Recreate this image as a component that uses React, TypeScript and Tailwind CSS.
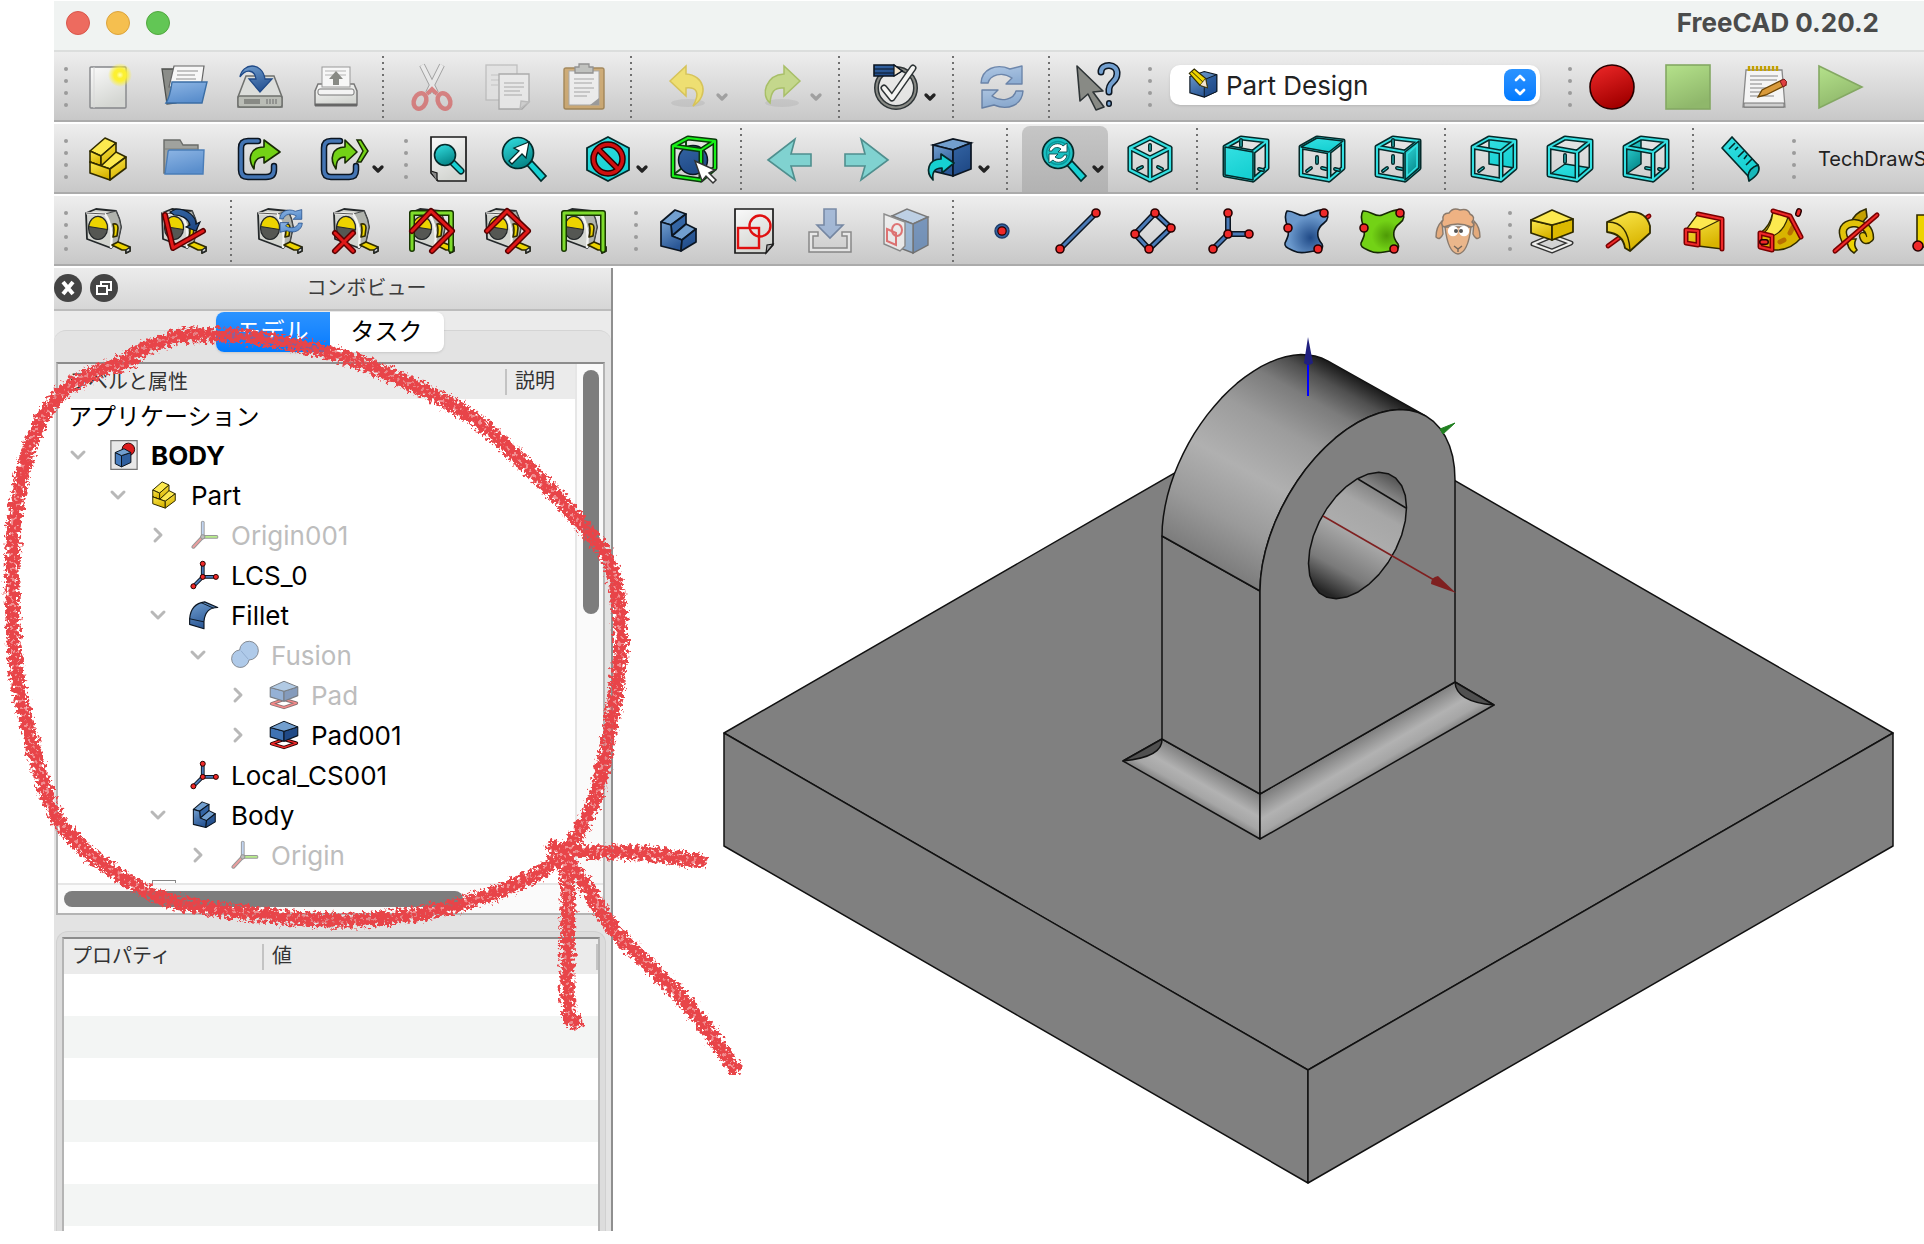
import { useState, type ReactNode } from "react";
import clsx from "clsx";
import { ChevronDown, ChevronRight, ChevronUp } from "lucide-react";

/* ---------- geometry helpers ---------- */

type Pt = [number, number];

// isometric circle: centre + u*cos + v*sin
function isoArc(cx: number, cy: number, k: number, from: number, to: number) {
  const pts: string[] = [];
  const steps = 28;
  for (let i = 0; i <= steps; i++) {
    const a = ((from + ((to - from) * i) / steps) * Math.PI) / 180;
    const x = cx + k * (97.5 * Math.cos(a));
    const y = cy - k * (55.5 * Math.cos(a) + 113 * Math.sin(a));
    pts.push(`${x.toFixed(1)},${y.toFixed(1)}`);
  }
  return pts.join(" L");
}

// smooth curve through a list of points
function smooth(p: Pt[]) {
  let d = `M${p[0][0]},${p[0][1]}`;
  for (let i = 0; i < p.length - 1; i++) {
    const a = p[Math.max(0, i - 1)];
    const b = p[i];
    const c = p[i + 1];
    const e = p[Math.min(p.length - 1, i + 2)];
    d += ` C${b[0] + (c[0] - a[0]) / 6},${b[1] + (c[1] - a[1]) / 6} ${c[0] - (e[0] - b[0]) / 6},${c[1] - (e[1] - b[1]) / 6} ${c[0]},${c[1]}`;
  }
  return d;
}

/* ---------- shared gradients ---------- */

function Gradients() {
  const list = [
    ["gBlue", "#729fcf", "#2a5796"],
    ["gBlueD", "#3465a4", "#204a87"],
    ["gYellow", "#fce94f", "#d8b400"],
    ["gCyan", "#34e0e2", "#16d0d2"],
    ["gCyanD", "#34e0e2", "#06898b"],
    ["gRed", "#ef2929", "#a40000"],
    ["gGrey", "#fafafa", "#d4d6d2"],
    ["gLime", "#b5e28b", "#8fb76b"],
    ["gFolder", "#8db5e4", "#5b8fcd"],
  ];
  return (
    <svg className="absolute h-0 w-0" aria-hidden="true">
      <defs>
        {list.map(([id, a, b]) => (
          <linearGradient key={id} id={id} x1="0" y1="0" x2="0.4" y2="1">
            <stop offset="0" stopColor={a} />
            <stop offset="1" stopColor={b} />
          </linearGradient>
        ))}
        <radialGradient id="gSun">
          <stop offset="0" stopColor="#ffffb0" />
          <stop offset="0.3" stopColor="#fcf032" />
          <stop offset="0.5" stopColor="#fcf032" />
          <stop offset="1" stopColor="#fcf032" stopOpacity="0" />
        </radialGradient>
        <radialGradient id="gBlob" cx="0.6" cy="0.65">
          <stop offset="0" stopColor="#204a87" />
          <stop offset="1" stopColor="#6a98cc" />
        </radialGradient>
        <radialGradient id="gBlobG" cx="0.6" cy="0.6">
          <stop offset="0" stopColor="#4e9a06" />
          <stop offset="0.7" stopColor="#73d216" />
        </radialGradient>
      </defs>
    </svg>
  );
}

/* ---------- icon building blocks ---------- */

function Rod({ d, c = "#4a7ab8", o = "#0b1521", w = 3 }: { d: string; c?: string; o?: string; w?: number }) {
  return (
    <g fill="none" strokeLinecap="round" strokeLinejoin="round">
      <path d={d} stroke={o} strokeWidth={w + 3} />
      <path d={d} stroke={c} strokeWidth={w} />
    </g>
  );
}

function Knobs({ at, r = 4 }: { at: Pt[]; r?: number }) {
  return (
    <g fill="#ef2929" stroke="#280000" strokeWidth="1.6">
      {at.map(([x, y]) => <circle key={`${x}-${y}`} cx={x} cy={y} r={r} />)}
    </g>
  );
}

function CubeRod({ d, w = 2 }: { d: string; w?: number }) {
  return <Rod d={d} c="#34e0e2" o="#042a2a" w={w} />;
}

const cubeFaces: Record<string, string> = {
  front: "M3,12 L31,17 V45 L3,40 Z",
  top: "M3,12 L19,3 L45,6 L31,17 Z",
  right: "M31,17 L45,6 V33 L31,45 Z",
  rear: "M19,3 L45,6 V33 L19,29 Z",
  bottom: "M3,40 L19,29 L45,33 L31,45 Z",
  left: "M3,12 L19,3 V29 L3,40 Z",
};

function Cube({ face }: { face: string }) {
  const behind = face === "rear" || face === "bottom" || face === "left";
  const shade = face === "left" || face === "right" ? "url(#gCyanD)" : "url(#gCyan)";
  const filled = <path d={cubeFaces[face]} fill={shade} stroke="#042a2a" strokeWidth="1.5" strokeLinejoin="round" />;
  return (
    <>
      {behind && filled}
      {face === "bottom" && <CubeRod d="M19,20 V27" w={1} />}
      {face === "left" && <CubeRod d="M24,33 L30,34 M37,34 L41,35" w={1} />}
      {face === "rear" && <CubeRod d="M9,36 L13,33" w={1} />}
      <CubeRod d="M3,12 L19,3 L45,6 L31,17 Z M3,12 V40 L31,45 V17 M31,45 L45,33 V6" />
      {!behind && filled}
      {face === "front" && <CubeRod d="M19,5 V11 M37,34 L41,35" w={1} />}
      {face === "top" && <CubeRod d="M19,22 V28 M9,36 L13,33 M24,33 L28,34 M37,34 L41,35" w={1} />}
      {face === "right" && (
        <>
          <CubeRod d="M19,5 V11 M19,21 V28 M9,36 L13,33 M23,33 L28,34" w={1} />
          <path d="M33,19 L43,10 V32 L33,41 Z" fill="none" stroke="#34e0e2" strokeWidth="1.6" />
        </>
      )}
    </>
  );
}

function Tape() {
  return (
    <g strokeLinejoin="round">
      <path d="M2,6 L12,2 L32,4 Q36,12 37,20 L34,34 L27,41 L3,32 Z" fill="#d3d5d0" stroke="#24282a" strokeWidth="1.8" />
      <path d="M21,7 L32,4 Q36,12 37,20 L34,34 L27,41 Q32,22 21,7 Z" fill="#b0b3ad" stroke="#4a4d4e" strokeWidth="1" />
      <path d="M2,6 L21,7 Q30,20 27,41" fill="none" stroke="#f4f4f2" strokeWidth="2.4" />
      <path d="M2,6 L21,7" fill="none" stroke="#555" strokeWidth="1" />
      <ellipse cx="14" cy="21" rx="9.5" ry="11.5" fill="#555753" stroke="#24282a" strokeWidth="1.2" />
      <path d="M4.6,19.5 A9.5,11.5 0 0 1 23.5,22.5 Z" fill="#edd400" stroke="#24282a" strokeWidth="1.2" />
      <path d="M29,17 Q34,16 34,21 L33,29 L29,30 Q31,23 29,17 Z" fill="#edd400" stroke="#302b00" strokeWidth="1.6" />
      <path d="M28,38 L34,35 L46,40 V44 L42,46 V43 L38,43 Z" fill="#edd400" stroke="#302b00" strokeWidth="1.7" />
      <path d="M46,40 V44 L42,46 V43 Z" fill="#d3d5d0" stroke="#24282a" strokeWidth="1.5" />
    </g>
  );
}

function Axes({ colors }: { colors: [string, string, string] }) {
  return (
    <>
      <Rod d="M22,27 V4" c={colors[0]} o="#444" w={3} />
      <Rod d="M22,27 H44" c={colors[1]} o="#444" w={3} />
      <Rod d="M22,27 L7,43" c={colors[2]} o="#444" w={3} />
      <circle cx="22" cy="27" r="3.5" fill="#888" stroke="#333" strokeWidth="1.4" />
    </>
  );
}

function Swirl() {
  return (
    <g fill="url(#gFolder)" stroke="#204a87" strokeWidth="1.4" strokeLinejoin="round">
      <path d="M3,20 C4,6 18,0 32,6 L44,3 L44,21 L28,21 L34,15 C24,8 12,12 10,20 Z" />
      <path d="M45,28 C44,42 30,48 16,42 L4,45 L4,27 L20,27 L14,33 C24,40 36,36 38,28 Z" />
    </g>
  );
}

const blob =
  "M5,4 C12,3 18,11 24,8 C32,5 36,2 42,3 C48,8 46,13 42,16 C34,22 34,30 40,37 C42,41 38,44 34,44 C26,44 20,48 12,44 C6,41 2,40 3,36 C6,30 8,26 5,18 C3,12 3,7 5,4 Z";

const icons: Record<string, ReactNode> = {
  new: (
    <>
      <rect x="6" y="4" width="36" height="41" rx="1" fill="url(#gGrey)" stroke="#85878a" strokeWidth="1.4" />
      <path d="M10,4 V45" stroke="#d8d8d8" />
      <circle cx="36" cy="12" r="12" fill="url(#gSun)" />
    </>
  ),
  open: (
    <>
      <path d="M2,6 H14 L16,40 L7,41 Z" fill="#8b8d89" stroke="#4d4f4c" strokeWidth="1.3" />
      <path d="M14,3 H44 L41,24 H9 Z" fill="#f7f7f7" stroke="#666" strokeWidth="1.2" />
      <path d="M17,8 H38 M17,12 H35 M16,16 H36" stroke="#b3b3b3" strokeWidth="1.6" />
      <path d="M12,19 H47 L42,40 H6 Q10,34 12,19 Z" fill="url(#gFolder)" stroke="#3b6ea5" strokeWidth="1.4" />
    </>
  ),
  save: (
    <>
      <path d="M10,13 H38 L46,34 V44 H2 V34 Z" fill="#dcdedb" stroke="#6f716e" strokeWidth="1.5" />
      <rect x="2" y="33" width="44" height="11" rx="2" fill="#babdb6" stroke="#6f716e" strokeWidth="1.4" />
      <rect x="8" y="36" width="16" height="5" fill="#888a85" />
      <path d="M31,36 V41 M34,36 V41 M37,36 V41 M40,36 V41" stroke="#777" strokeWidth="1.2" />
      <path d="M4,14 C6,0 26,-2 29,16 H36 L24,29 L13,16 H20 C19,7 10,5 4,14 Z" fill="url(#gBlue)" stroke="#204a87" strokeWidth="1.3" />
    </>
  ),
  print: (
    <>
      <path d="M6,21 H42 L45,28 V42 H3 V28 Z" fill="url(#gGrey)" stroke="#777" strokeWidth="1.5" />
      <path d="M3,42 H45" stroke="#666" strokeWidth="3" />
      <rect x="6" y="26" width="36" height="6" rx="2" fill="#f4f4f4" stroke="#777" />
      <rect x="10" y="4" width="28" height="20" fill="#f7f7f7" stroke="#999" />
      <path d="M13,8 H34 M13,12 H34" stroke="#ccc" strokeWidth="1.4" />
      <path d="M24,8 L31,16 H27 V22 H21 V16 H17 Z" fill="#888a85" />
    </>
  ),
  cut: (
    <g opacity="0.6">
      <path d="M14,2 L28,30 M34,2 L20,30" stroke="#777" strokeWidth="6" />
      <path d="M14,2 L28,30 M34,2 L20,30" stroke="#eee" strokeWidth="4" />
      <g fill="none" stroke="#d44a4a" strokeWidth="4.5">
        <ellipse cx="12" cy="38" rx="6" ry="8" transform="rotate(25 12 38)" />
        <ellipse cx="36" cy="38" rx="6" ry="8" transform="rotate(-25 36 38)" />
      </g>
      <path d="M19,31 L24,26 L29,31" fill="none" stroke="#d44a4a" strokeWidth="4" />
    </g>
  ),
  copy: (
    <g opacity="0.75" stroke="#b3b3b3" strokeWidth="1.3">
      <rect x="2" y="2" width="31" height="35" fill="#e2e2e2" />
      <path d="M7,12 H18 M7,17 H15 M7,22 H14" stroke="#c8c8c8" />
      <path d="M15,11 H45 V39 L38,46 H15 Z" fill="#ececec" stroke="#999" />
      <path d="M20,20 H40 M20,24 H40 M20,28 H36 M20,32 H38" stroke="#b5b5b5" strokeWidth="1.6" />
      <path d="M45,39 L37,38 L36,46 Z" fill="#ccc" />
    </g>
  ),
  paste: (
    <g opacity="0.75">
      <rect x="4" y="5" width="40" height="41" rx="2" fill="#c79a55" stroke="#8f6b30" strokeWidth="1.4" />
      <rect x="9" y="8" width="30" height="34" fill="#f2f2f2" stroke="#999" />
      <path d="M14,16 H34 M14,20 H32 M14,25 H34 M14,29 H30 M14,33 H27" stroke="#b3b3b3" strokeWidth="1.7" />
      <path d="M39,35 L30,42 H39 Z" fill="#888" />
      <path d="M15,10 V4 H19 V1 H29 V4 H33 V10 Z" fill="#b5b7b3" stroke="#777" strokeWidth="1.3" />
    </g>
  ),
  undo: (
    <>
      <ellipse cx="24" cy="40" rx="17" ry="4" fill="#000" opacity="0.06" />
      <path d="M6,18 L22,3 V11 C40,12 46,32 29,43 C37,29 32,24 22,25 V33 Z" fill="#eedf72" stroke="#d6c35a" strokeWidth="1.5" />
    </>
  ),
  redo: (
    <>
      <ellipse cx="24" cy="40" rx="17" ry="4" fill="#000" opacity="0.06" />
      <path d="M42,18 L26,3 V11 C8,12 2,32 12,40 C13,29 16,24 26,25 V33 Z" fill="#c4d78c" stroke="#a8bf68" strokeWidth="1.5" />
    </>
  ),
  check: (
    <>
      <circle cx="24" cy="25" r="19.5" fill="#eeeeec" fillOpacity="0.6" stroke="#2e3436" strokeWidth="5" />
      <circle cx="24" cy="25" r="19.5" fill="none" stroke="#888a85" strokeWidth="2" />
      <path d="M12,25 L20,35 L41,5" fill="none" stroke="#2e3436" strokeWidth="7" strokeLinecap="round" strokeLinejoin="round" />
      <path d="M12,25 L20,35 L41,5" fill="none" stroke="#f4f4f2" strokeWidth="4" strokeLinecap="round" strokeLinejoin="round" />
      <path d="M2,2 H22 L30,8 L22,13 H2 Z" fill="url(#gBlueD)" stroke="#0b1521" strokeWidth="1.6" />
      <path d="M22,2 L30,8 L22,13 Z" fill="#f3e5cf" stroke="#0b1521" strokeWidth="1.2" />
      <path d="M2,6 H22 M2,10 H22" stroke="#0b1521" strokeWidth="1" />
    </>
  ),
  refresh: <g opacity="0.6"><Swirl /></g>,
  help: (
    <>
      <path d="M3,3 L29,28 L19,29 L30,44 L22,47 L14,31 L6,38 Z" fill="#888a85" stroke="#2e3436" strokeWidth="1.6" strokeLinejoin="round" />
      <Rod d="M27,9 C27,0 44,0 43,11 C43,20 34,18 35,29" c="#729fcf" w={4} />
      <Rod d="M35,40 V41" c="#729fcf" w={3} />
    </>
  ),
  record: <circle cx="24" cy="24" r="22" fill="url(#gRed)" stroke="#280000" strokeWidth="1.6" />,
  stop: <rect x="2" y="2" width="44" height="44" fill="url(#gLime)" stroke="#84a863" strokeWidth="1.6" />,
  notepad: (
    <>
      <path d="M6,7 H42 L45,44 H3 Z" fill="#f5f5f5" stroke="#888" strokeWidth="1.3" />
      <path d="M4,40 H44 V44 H4 Z" fill="#cfcfcf" stroke="#777" strokeWidth="1" />
      <path d="M10,13 H38 M10,17 H37 M10,21 H22 M10,25 H30 M10,29 H24 M10,33 H34" stroke="#aaa" strokeWidth="1.6" />
      <path d="M9,3 V8 M13,3 V8 M17,3 V8 M21,3 V8 M25,3 V8 M29,3 V8 M33,3 V8 M37,3 V8" stroke="#c4a000" strokeWidth="2.4" />
      <path d="M18,34 L22,27 L42,17 L46,22 L26,32 Z" fill="#d99a3b" stroke="#6b4506" strokeWidth="1.3" />
      <path d="M40,18 L44,16 Q48,18 46,22 L43,24 Z" fill="#e04040" stroke="#7a1a1a" />
    </>
  ),
  play: <path d="M3,3 L46,24 L3,45 Z" fill="url(#gLime)" stroke="#84a863" strokeWidth="1.6" />,
  part: (
    <g fill="url(#gYellow)" stroke="#302b00" strokeWidth="1.6" strokeLinejoin="round">
      <path d="M6,16 L21,3 L32,8 L17,21 Z" fill="#fce94f" />
      <path d="M6,16 L17,21 V31 L6,27 Z" />
      <path d="M17,21 L32,8 V19 L17,31 Z" />
      <path d="M6,27 L17,31 L32,17 L42,22 L26,34 Z" fill="#fce94f" />
      <path d="M6,27 L26,34 V45 L6,38 Z" />
      <path d="M26,34 L42,22 V33 L26,45 Z" />
    </g>
  ),
  folder: (
    <>
      <path d="M4,5 H20 L23,10 H38 V38 H4 Z" fill="#a0a29e" stroke="#6a6c69" strokeWidth="1.4" />
      <path d="M4,14 H38" stroke="#7d7f7b" />
      <path d="M8,17 Q8,15 10,15 H44 L43,39 H5 Z" fill="url(#gFolder)" stroke="#4a7db8" strokeWidth="1.4" />
    </>
  ),
  link: (
    <>
      <Rod d="M22,6 H12 Q5,6 5,13 V35 Q5,42 12,42 H30 Q38,42 38,35 V31" c="#4475b4" w={3.5} />
      <path d="M28,5 L44,17 L28,28 V22 C20,22 18,27 18,34 C11,24 14,12 28,12 Z" fill="#73d216" stroke="#172a04" strokeWidth="1.6" strokeLinejoin="round" />
    </>
  ),
  links: (
    <>
      <Rod d="M20,6 H11 Q4,6 4,13 V35 Q4,42 11,42 H29 Q36,42 36,35 V31" c="#4475b4" w={3.5} />
      <path d="M25,5 L37,17 L25,28 V22 C18,22 16,27 16,34 C9,24 12,12 25,12 Z" fill="#73d216" stroke="#172a04" strokeWidth="1.6" strokeLinejoin="round" />
      <path d="M37,5 H41 L48,16 L41,27 H37 L43,16 Z" fill="#73d216" stroke="#172a04" strokeWidth="1.5" />
    </>
  ),
  fitPage: (
    <>
      <path d="M7,2 H42 V46 H14 L7,38 Z" fill="url(#gGrey)" stroke="#1b1b1b" strokeWidth="1.7" />
      <path d="M7,36 L13,38 V46" fill="#888" stroke="#1b1b1b" strokeWidth="1.3" />
      <Rod d="M29,28 L37,36" c="#16d0d2" o="#042a2a" w={4} />
      <circle cx="21" cy="20" r="10.5" fill="url(#gCyanD)" stroke="#042a2a" strokeWidth="1.6" />
    </>
  ),
  fitSel: (
    <>
      <path d="M27,30 L32,26 L46,41 L41,46 Z" fill="#16d0d2" stroke="#042a2a" strokeWidth="1.7" />
      <circle cx="18" cy="18" r="15.5" fill="url(#gCyanD)" stroke="#042a2a" strokeWidth="1.7" />
      <path d="M9,26 L19,16 L14,13 L29,7 L26,23 L22,19 L12,29 Z" fill="#fff" stroke="#042a2a" strokeWidth="1.3" />
    </>
  ),
  noDraw: (
    <>
      <path d="M24,2 L45,13 V35 L24,46 L3,35 V13 Z" fill="url(#gCyan)" stroke="#042a2a" strokeWidth="1.8" />
      <g fill="none">
        <circle cx="24" cy="24" r="14.5" stroke="#280000" strokeWidth="6.5" />
        <path d="M14,14 L34,34" stroke="#280000" strokeWidth="6.5" />
        <circle cx="24" cy="24" r="14.5" stroke="#d01010" strokeWidth="3.6" />
        <path d="M14,14 L34,34" stroke="#d01010" strokeWidth="3.6" />
      </g>
    </>
  ),
  bbox: (
    <>
      <path d="M16,4 V30 M3,40 L16,30 L44,34" fill="none" stroke="#0c4a0c" strokeWidth="2" />
      <circle cx="23" cy="25" r="14.5" fill="url(#gBlueD)" stroke="#0b1521" strokeWidth="1.5" />
      <Rod d="M3,11 L18,3 L45,6 L31,15 Z M3,11 V41 L31,45 V15 M31,45 L45,33 V6" c="#18f018" o="#0a3a0a" w={2} />
      <path d="M25,26 L45,35 L39,38 L46,45 L43,48 L36,41 L32,46 Z" fill="#fff" stroke="#333" strokeWidth="1.5" />
    </>
  ),
  left: <path d="M2,25 L29,4 L25,19 H45 V31 H25 L29,45 Z" fill="#80d2d0" stroke="#4f8f8e" strokeWidth="1.6" />,
  right: <path d="M46,25 L19,4 L23,19 H3 V31 H23 L19,45 Z" fill="#80d2d0" stroke="#4f8f8e" strokeWidth="1.6" />,
  linkCube: (
    <>
      <path d="M7,10 L27,4 L45,8 L27,15 Z" fill="#729fcf" stroke="#0b1521" strokeWidth="1.7" />
      <path d="M7,10 L27,15 V41 L7,36 Z" fill="url(#gBlue)" stroke="#0b1521" strokeWidth="1.7" />
      <path d="M27,15 L45,8 V34 L27,41 Z" fill="url(#gBlueD)" stroke="#0b1521" strokeWidth="1.7" />
      <path d="M15,19 L28,28 L16,38 V33 C8,33 6,38 7,45 C-1,37 2,24 15,24 Z" fill="#16d0d2" stroke="#042a2a" strokeWidth="1.7" strokeLinejoin="round" />
    </>
  ),
  viewSync: (
    <>
      <path d="M27,30 L32,26 L46,41 L41,46 Z" fill="#16d0d2" stroke="#042a2a" strokeWidth="1.7" />
      <circle cx="18" cy="18" r="15.5" fill="#1cc0c2" stroke="#042a2a" strokeWidth="1.7" />
      <circle cx="18" cy="18" r="11.5" fill="none" stroke="#06989a" strokeWidth="1.5" />
      <path d="M9,16 C10,8 20,7 23,11 L27,8 V17 H18 L21,14 C17,11 13,13 12,16 Z M27,20 C26,28 16,29 13,25 L9,28 V19 H18 L15,22 C19,25 23,23 24,20 Z" fill="#fff" stroke="#064a4a" strokeWidth="0.9" />
    </>
  ),
  iso: (
    <>
      <Rod d="M24,3 L44,13 V35 L24,45 L4,35 V13 Z M4,13 L24,23 L44,13 M24,23 V45" c="#34e0e2" o="#042a2a" w={2.2} />
      <Rod d="M24,10 V15 M12,34 L16,32 M32,32 L36,34" c="#34e0e2" o="#042a2a" w={1} />
    </>
  ),
  ruler: (
    <>
      <path d="M4,13 L14,2 L40,30 L33,35 L30,41 Z" fill="url(#gCyan)" stroke="#042a2a" strokeWidth="1.7" strokeLinejoin="round" />
      <path d="M40,30 Q44,38 31,46 L30,41 Q31,33 40,30 Z" fill="#16b8ba" stroke="#042a2a" strokeWidth="1.7" strokeLinejoin="round" />
      <path d="M11,14 L17,8 M17,15 L20,12 M20,22 L26,16 M26,24 L29,20 M28,30 L34,24" fill="none" stroke="#042a2a" strokeWidth="1.6" />
    </>
  ),
  tape: <Tape />,
  tapeAngle: (
    <>
      <Tape />
      <path d="M10,5 L16,2 C28,2 36,10 36,17 L40,15 L36,24 L26,20 L30,18 C28,11 21,8 14,8 Z" fill="url(#gBlueD)" stroke="#0b1521" strokeWidth="1.2" />
      <Rod d="M5,8 L13,41 L43,24" c="#e01818" o="#5a0000" w={3} />
    </>
  ),
  tapeRefresh: (
    <>
      <Tape />
      <g transform="translate(22 1) scale(0.54)"><Swirl /></g>
    </>
  ),
  tapeClear: (
    <>
      <Tape />
      <Rod d="M3,26 L21,44 M21,26 L3,44" c="#e01818" o="#5a0000" w={3} />
    </>
  ),
  tapeAll: (
    <>
      <Tape />
      <Rod d="M4,42 V6 H43 V43" c="#7fdc2c" o="#173600" w={3} />
      <Rod d="M4,24 L23,4 L44,24 L24,44" c="#e01818" o="#5a0000" w={3} />
    </>
  ),
  tape3d: (
    <>
      <Tape />
      <Rod d="M3,24 L23,4 L44,24 L24,44" c="#e01818" o="#5a0000" w={3} />
    </>
  ),
  tapeDelta: (
    <>
      <Tape />
      <Rod d="M4,42 V6 H43 V43" c="#7fdc2c" o="#173600" w={3} />
    </>
  ),
  body: (
    <g stroke="#0b1521" strokeWidth="1.7" strokeLinejoin="round">
      <path d="M7,15 L21,3 L32,7 L17,18 Z" fill="#729fcf" />
      <path d="M17,18 L32,7 V17 L18,29 Z" fill="#3465a4" />
      <path d="M18,29 L32,17 L42,22 L28,33 Z" fill="#729fcf" />
      <path d="M7,15 L17,18 L18,29 L28,33 L27,44 L7,39 Z" fill="url(#gBlue)" />
      <path d="M28,33 L42,22 V35 L27,44 Z" fill="url(#gBlueD)" />
    </g>
  ),
  sketch: (
    <>
      <path d="M5,2 H43 V38 L36,46 H5 Z" fill="url(#gGrey)" stroke="#1b1b1b" strokeWidth="1.7" />
      <path d="M43,37 L37,38 L36,46 Z" fill="#aaa" stroke="#1b1b1b" strokeWidth="1.2" />
      <g fill="none" stroke="#e01010" strokeWidth="2.4">
        <rect x="8" y="21" width="21" height="20" />
        <circle cx="30" cy="19" r="10.5" />
      </g>
    </>
  ),
  import: (
    <g opacity="0.6">
      <path d="M18,2 H30 V18 H37 L24,31 L11,18 H18 Z" fill="#7d9fcf" stroke="#33507d" strokeWidth="1.6" />
      <path d="M12,25 H3 V45 H45 V25 H36 V29 H41 V41 H7 V29 H12 Z" fill="#f2f2f2" stroke="#555" strokeWidth="1.5" />
    </g>
  ),
  mapSketch: (
    <g opacity="0.6">
      <path d="M10,9 L25,2 L46,10 L31,17 Z" fill="#a5c4e6" stroke="#333" strokeWidth="1.4" />
      <path d="M31,17 L46,10 V38 L31,46 Z" fill="#3465a4" stroke="#333" strokeWidth="1.4" />
      <path d="M10,9 L31,17 V46 L10,38 Z" fill="#729fcf" stroke="#333" strokeWidth="1.4" />
      <path d="M2,7 L23,15 V39 L18,44 L2,37 Z" fill="#f5f5f5" stroke="#555" strokeWidth="1.4" />
      <path d="M5,22 L14,26 V38 L5,34 Z" fill="none" stroke="#e03030" strokeWidth="2" />
      <ellipse cx="15" cy="23" rx="5" ry="6" fill="none" stroke="#e03030" strokeWidth="2" />
    </g>
  ),
  point: (
    <>
      <circle cx="24" cy="24" r="7" fill="#3465a4" stroke="#1d3d6b" strokeWidth="1.4" />
      <circle cx="24" cy="24" r="4.2" fill="#ef2929" stroke="#280000" strokeWidth="1.2" />
    </>
  ),
  line: (
    <>
      <Rod d="M6,42 L42,6" />
      <Knobs at={[[6, 42], [42, 6]]} />
    </>
  ),
  plane: (
    <>
      <Rod d="M25,6 L41,21 L19,42 L5,27 Z" />
      <Knobs at={[[25, 6], [41, 21], [19, 42], [5, 27]]} />
    </>
  ),
  lcs: (
    <>
      <Rod d="M22,6 V27 H43 M22,27 L7,42" />
      <Knobs at={[[22, 6], [22, 27], [43, 27], [7, 42]]} />
    </>
  ),
  binder: (
    <>
      <path d={blob} fill="url(#gBlob)" stroke="#0b1521" strokeWidth="1.6" />
      <Knobs at={[[42, 6], [6, 21], [36, 42]]} />
    </>
  ),
  subBinder: (
    <>
      <path d={blob} fill="url(#gBlobG)" stroke="#172a04" strokeWidth="1.6" />
      <Knobs at={[[42, 6], [6, 21], [36, 42]]} />
    </>
  ),
  clone: (
    <g stroke="#8a7a6c" strokeWidth="1.4">
      <path d="M8,14 Q2,20 2,30 Q6,34 9,27 Z M40,14 Q46,20 46,30 Q42,34 39,27 Z" fill="#e3aa7c" />
      <path d="M11,20 Q14,46 24,47 Q34,46 37,20 Z" fill="#eab68b" />
      <path d="M10,20 Q6,17 9,13 Q8,6 15,6 Q19,0 26,3 Q34,1 36,7 Q42,10 38,15 Q42,19 37,20 Q24,14 10,20 Z" fill="#eeb283" />
      <circle cx="19" cy="24" r="5.2" fill="#fff" stroke="none" />
      <circle cx="30" cy="24" r="5.2" fill="#fff" stroke="none" />
      <circle cx="22" cy="24" r="2" fill="#555" stroke="none" />
      <circle cx="27" cy="24" r="2" fill="#555" stroke="none" />
      <path d="M20,39 L24,42 L28,39 M24,42 V45" fill="none" stroke="#75685d" />
    </g>
  ),
  pad: (
    <>
      <Rod d="M5,37 L24,29 L43,36 L24,44 Z" c="#eeeeec" o="#333" w={2} />
      <path d="M3,13 L24,18 V33 L3,26 Z" fill="url(#gYellow)" stroke="#302b00" strokeWidth="1.8" strokeLinejoin="round" />
      <path d="M24,18 L45,12 V25 L24,33 Z" fill="#dcb900" stroke="#302b00" strokeWidth="1.8" strokeLinejoin="round" />
      <path d="M3,13 L24,18 L45,12 L24,3 Z" fill="#fce94f" stroke="#302b00" strokeWidth="1.6" strokeLinejoin="round" />
    </>
  ),
  padBlue: (
    <>
      <Rod d="M4,38 L24,31 L44,37 L24,44 Z" c="#ef2929" o="#280000" w={2.4} />
      <path d="M2,12 L24,18 V34 L2,27 Z" fill="#3f73b3" stroke="#0b1521" strokeWidth="1.8" strokeLinejoin="round" />
      <path d="M24,18 L46,11 V25 L24,34 Z" fill="#204a87" stroke="#0b1521" strokeWidth="1.8" strokeLinejoin="round" />
      <path d="M2,12 L24,18 L46,11 L24,2 Z" fill="#729fcf" stroke="#0b1521" strokeWidth="1.6" strokeLinejoin="round" />
    </>
  ),
  revolution: (
    <>
      <Rod d="M4,39 L45,9" c="#ef2929" o="#7a0000" w={1.8} />
      <path d="M3,15 L25,5 Q42,4 46,19 V26 L26,44 L21,41 Q19,27 3,25 Z" fill="url(#gYellow)" stroke="#302b00" strokeWidth="1.8" strokeLinejoin="round" />
      <path d="M3,15 Q24,14 26,43" fill="none" stroke="#302b00" strokeWidth="1.4" />
    </>
  ),
  loft: (
    <>
      <path d="M18,7 L42,12 V42 L18,39 L6,37 V23 Z" fill="url(#gYellow)" stroke="#302b00" strokeWidth="1.4" />
      <path d="M6,23 L18,7 L42,12 L18,24 Z" fill="#fce94f" stroke="#302b00" strokeWidth="1.2" />
      <Rod d="M18,7 L42,12 V42" c="#ef2929" o="#7a0000" w={2} />
      <Rod d="M6,23 L18,24 V38 L6,36 Z" c="#ef2929" o="#7a0000" w={2} />
    </>
  ),
  pipe: (
    <>
      <path d="M17,5 L32,10 L45,31 Q34,44 17,43 L4,40 V26 Q14,20 17,5 Z" fill="#d8b400" stroke="#302b00" strokeWidth="1.4" />
      <path d="M17,5 L32,10 Q28,24 17,29 L8,26 Q15,20 17,5 Z" fill="#fce94f" stroke="#302b00" strokeWidth="1.2" />
      <path d="M34,26 L37,20 M24,35 L28,33" stroke="#b87000" strokeWidth="5" strokeLinecap="round" />
      <Rod d="M17,4 L34,9 L45,30" c="#ef2929" o="#7a0000" w={2} />
      <Rod d="M4,26 L16,29 V43 L4,40 Z" c="#ef2929" o="#7a0000" w={2} />
      <Rod d="M43,4 L42,7 M6,35 H10" c="#ef2929" o="#280000" w={3} />
    </>
  ),
  helix: (
    <>
      <path d="M19,16 Q22,6 34,2 L35,10 L29,17 Z" fill="#c4a000" stroke="#302b00" strokeWidth="1.6" />
      <path d="M15,32 Q15,42 22,46 L25,43 Q21,38 24,32 Z" fill="#edd400" stroke="#302b00" strokeWidth="1.6" />
      <Rod d="M13,33 Q6,18 22,16 Q38,18 38,31 Q33,36 31,29" c="#e2c20a" o="#302b00" w={5.5} />
      <Rod d="M3,44 L45,8" c="#ef2929" o="#7a0000" w={2} />
    </>
  ),
  pocket: (
    <>
      <path d="M9,8 H46 V40 H9 Z" fill="#edd400" stroke="#302b00" strokeWidth="1.6" />
      <Knobs at={[[10, 39]]} r={5} />
    </>
  ),
  bodyDoc: (
    <>
      <rect x="3" y="1" width="42" height="46" fill="#e8e8e8" stroke="#777" strokeWidth="2" />
      <circle cx="31" cy="15" r="10" fill="#dd1c1c" stroke="#280000" strokeWidth="1.5" />
      <path d="M10,20 L20,25 V43 L10,38 Z" fill="#4a7fc0" stroke="#0b1521" strokeWidth="1.6" />
      <path d="M20,25 L35,20 V36 L20,43 Z" fill="#2f5f9f" stroke="#0b1521" strokeWidth="1.6" />
      <path d="M10,20 L20,25 L35,20 L24,14 Z" fill="#729fcf" stroke="#0b1521" strokeWidth="1.6" />
    </>
  ),
  origin: <Axes colors={["#8fb4e6", "#7fe030", "#e05050"]} />,
  fillet: (
    <g stroke="#0b1521" strokeWidth="1.8" strokeLinejoin="round">
      <path d="M1,30 Q3,6 25,3 L46,12 Q26,12 24,34 V46 L1,39 Z" fill="url(#gBlue)" />
      <path d="M1,30 L24,35 M19,4 L39,13" fill="none" strokeWidth="1.5" />
    </g>
  ),
  fusion: (
    <g stroke="#0b1521" strokeWidth="1.4">
      <path d="M17,16 A15,15 0 1 1 32,32 A14,14 0 1 1 17,16 Z" fill="#6f9fd8" />
      <path d="M19,17 L31,31" stroke="#3465a4" />
    </g>
  ),
  partDesign: (
    <>
      <path d="M3,12 L26,4 L46,9 V36 L26,45 L3,38 Z" fill="url(#gBlue)" stroke="#0b1521" strokeWidth="1.8" />
      <path d="M26,17 L46,9 V36 L26,45 Z" fill="url(#gBlueD)" stroke="#0b1521" strokeWidth="1.5" />
      <path d="M2,7 L10,0 L28,15 L31,30 L19,26 Z" fill="#edd400" stroke="#302b00" strokeWidth="1.8" />
      <path d="M6,4 L24,21" stroke="#302b00" strokeWidth="1.6" />
      <path d="M19,26 L28,15 L31,30 Z" fill="#f3e5cf" stroke="#302b00" strokeWidth="1.2" />
    </>
  ),
};

function Icon({ name, className = "size-12" }: { name: string; className?: string }) {
  return (
    <svg viewBox="0 0 48 48" className={clsx("shrink-0 overflow-visible", className)} aria-hidden="true">
      {name.startsWith("view-") ? <Cube face={name.slice(5)} /> : icons[name]}
    </svg>
  );
}

/* ---------- toolbar ---------- */

function Tool({ name, label }: { name: string; label: string }) {
  return (
    <button type="button" aria-label={label} className="flex h-full w-[76px] shrink-0 items-center justify-center">
      <Icon name={name} />
    </button>
  );
}

function MenuTool({ name, label, dim, active }: { name: string; label: string; dim?: boolean; active?: boolean }) {
  return (
    <div className="h-full w-[94px] shrink-0 px-1">
      <button
        type="button"
        aria-label={label}
        aria-haspopup="menu"
        className={clsx("flex h-full w-full items-center rounded-t-lg pl-[18px]", active && "bg-linear-to-b from-[#c6c6c6] to-[#b2b2b2]")}
      >
        <Icon name={name} />
        <ChevronDown className={clsx("mt-5 ml-[2px] size-4 shrink-0", dim ? "text-[#a0a0a0]" : "text-[#222]")} strokeWidth={5} />
      </button>
    </div>
  );
}

function Sep() {
  return (
    <div className="flex w-5 shrink-0 justify-center pr-[2px]">
      <div className="h-[62px] w-[2px] bg-[repeating-linear-gradient(to_bottom,#707070_0_2px,transparent_2px_6px)]" />
    </div>
  );
}

function Handle() {
  return (
    <div className="flex w-[18px] shrink-0 flex-col items-end gap-2 pr-[2px]">
      {[0, 1, 2, 3].map((n) => <span key={n} className="size-1 rounded-full bg-[#9b9b9b]" />)}
    </div>
  );
}

function Toolbar({ label, children }: { label: string; children: ReactNode }) {
  return (
    <div
      role="toolbar"
      aria-label={label}
      className="mb-[2px] flex h-[70px] shrink-0 items-center overflow-hidden border-b-2 border-[#ababab] bg-linear-to-b from-[#eeeeee] to-[#c8c8c8] pt-[2px]"
    >
      {children}
    </div>
  );
}

/* ---------- model tree ---------- */

type Node = { label: string; icon: string; level: number; open?: boolean; dim?: boolean; bold?: boolean };

const nodes: Node[] = [
  { label: "BODY", icon: "bodyDoc", level: 0, open: true, bold: true },
  { label: "Part", icon: "part", level: 1, open: true },
  { label: "Origin001", icon: "origin", level: 2, open: false, dim: true },
  { label: "LCS_0", icon: "lcs", level: 2 },
  { label: "Fillet", icon: "fillet", level: 2, open: true },
  { label: "Fusion", icon: "fusion", level: 3, open: true, dim: true },
  { label: "Pad", icon: "padBlue", level: 4, open: false, dim: true },
  { label: "Pad001", icon: "padBlue", level: 4, open: false },
  { label: "Local_CS001", icon: "lcs", level: 2 },
  { label: "Body", icon: "body", level: 2, open: true },
  { label: "Origin", icon: "origin", level: 3, open: false, dim: true },
];

const indent = ["pl-2", "pl-12", "pl-[88px]", "pl-32", "pl-[168px]"];

function TreeRow({ node }: { node: Node }) {
  const Arrow = node.open ? ChevronDown : ChevronRight;
  return (
    <li className={clsx("flex h-10 items-center text-[26px]", indent[node.level], node.dim ? "text-[#bdbdbd]" : "text-black", node.bold && "font-bold")}>
      <span className="flex w-[43px] shrink-0">
        {node.open !== undefined && <Arrow className="size-6 text-[#b8b8b8]" strokeWidth={3} />}
      </span>
      <Icon name={node.icon} className={clsx("size-[30px]", node.dim && "opacity-55")} />
      <span className="ml-3">{node.label}</span>
    </li>
  );
}

function ComboView() {
  const [tab, setTab] = useState("モデル");
  return (
    <aside className="mb-[13px] flex w-[559px] shrink-0 flex-col border-r-2 border-[#8f8f8f] bg-[#ebebeb]">
      <header className="flex h-[43px] shrink-0 items-center gap-2 border-b-2 border-[#bcbcbc] bg-linear-to-b from-[#ececec] to-[#d6d6d6] pb-[2px]">
        <button type="button" aria-label="閉じる" className="flex size-7 items-center justify-center rounded-full bg-[#444] text-white">
          <svg viewBox="0 0 16 16" className="size-4"><path d="M3,2 L13,14 M13,2 L3,14" stroke="currentColor" strokeWidth="4" /></svg>
        </button>
        <button type="button" aria-label="フロート" className="flex size-7 items-center justify-center rounded-full bg-[#444] text-white">
          <svg viewBox="0 0 16 16" className="size-4"><path d="M5,5 V2 H15 V10 H12 M1,6 H11 V14 H1 Z" fill="none" stroke="currentColor" strokeWidth="2" /></svg>
        </button>
        <h2 className="flex-1 pr-1 text-center text-[20px] text-[#3c3c3c]">コンボビュー</h2>
      </header>

      <div className="relative flex min-h-0 flex-1 flex-col">
        <div className="h-[19px] shrink-0" />
        <div className="flex min-h-0 flex-1 flex-col rounded-t-xl border-t border-[#d4d4d4] bg-[#e3e3e3] pt-[31px]">
          {/* the tab pair straddles the group frame */}
          <div className="absolute inset-x-0 top-px flex justify-center pr-[6px]">
            <div role="tablist" className="flex h-10 w-[228px] overflow-hidden rounded-lg bg-white shadow-sm">
              {["モデル", "タスク"].map((t) => (
                <button
                  key={t}
                  type="button"
                  role="tab"
                  aria-selected={tab === t}
                  onClick={() => setTab(t)}
                  className={clsx("flex-1 text-[24px]", tab === t ? "bg-linear-to-b from-[#2b93ff] to-[#007aff] text-white" : "text-black")}
                >
                  {t}
                </button>
              ))}
            </div>
          </div>

          <div className="mr-[6px] ml-[2px] flex h-[553px] shrink-0 flex-col border-2 border-[#b4b4b4] border-t-[#8c8c8c] bg-white">
            <div className="flex min-h-0 flex-1">
              <div className="flex min-w-0 flex-1 flex-col overflow-hidden">
                <div className="flex h-[35px] shrink-0 items-center bg-[#ebebeb] text-[20px] text-[#333]">
                  <span className="flex-1 pl-[10px]">ラベルと属性</span>
                  <span className="h-[26px] w-[70px] border-l-2 border-[#c3c3c3] pl-2 leading-6">説明</span>
                </div>
                <p className="flex h-9 shrink-0 items-center pl-[10px] text-[24px] text-black">アプリケーション</p>
                <ul className="shrink-0">
                  {nodes.map((n) => <TreeRow key={n.label} node={n} />)}
                </ul>
                <div className="mt-[5px] ml-[94px] size-6 shrink-0 border border-[#888] bg-white" />
              </div>
              <div className="w-7 shrink-0 border-l-2 border-[#e6e6e6] bg-[#fafafa] pt-[6px] pl-[6px]">
                <div className="h-[244px] w-4 rounded-full bg-[#7d7d7d]" />
              </div>
            </div>
            <div className="h-[30px] shrink-0 border-t-2 border-[#e6e6e6] bg-[#fafafa] pt-[6px] pl-[6px]">
              <div className="h-4 w-[399px] rounded-full bg-[#7d7d7d]" />
            </div>
          </div>

          <div className="flex h-4 shrink-0 items-center justify-center pr-1">
            <span className="size-[10px] rounded-full bg-[#c9c9c9]" />
          </div>

          <div className="mr-[5px] ml-[2px] min-h-0 flex-1 overflow-hidden rounded-t-xl border border-b-0 border-[#d0d0d0] bg-[#dcdcdc] px-[5px] pt-[5px]">
            <div className="h-full overflow-hidden border-2 border-b-0 border-[#b4b4b4] border-t-[#8c8c8c]">
              <table className="w-full table-fixed text-left text-[20px] text-[#333]">
                <thead>
                  <tr className="h-[35px] bg-[#ebebeb]">
                    <th className="w-[200px] p-0 font-normal"><span className="block h-[26px] border-r-2 border-[#c3c3c3] pl-2 leading-6">プロパティ</span></th>
                    <th className="p-0 font-normal"><span className="block h-[26px] border-r-2 border-[#c3c3c3] pl-2 leading-6">値</span></th>
                  </tr>
                </thead>
                <tbody>
                  {[0, 1, 2, 3, 4, 5, 6].map((r) => (
                    <tr key={r} className="h-[42px] odd:bg-white even:bg-[#f3f5f4]"><td /><td /></tr>
                  ))}
                </tbody>
              </table>
            </div>
          </div>
        </div>
      </div>
    </aside>
  );
}

/* ---------- 3D view ---------- */

function Model() {
  const front = isoArc(1357.5, 535.5, 1, 180, 0);
  const backHalf = isoArc(1259.5, 480.5, 1, 180, 45.7);
  const frontBack = isoArc(1357.5, 535.5, 1, 45.7, 180);
  const hole = isoArc(1357.5, 535.5, 0.503, 0, 360);
  return (
    <svg viewBox="613 268 1311 976" preserveAspectRatio="xMinYMin meet" className="h-full w-full" role="img" aria-label="3D">
      <defs>
        <linearGradient id="arch" gradientUnits="userSpaceOnUse" x1="1162" y1="536" x2="1276" y2="332">
          <stop offset="0" stopColor="#7c7c7c" />
          <stop offset="0.2" stopColor="#9a9a9a" />
          <stop offset="0.42" stopColor="#b0b0b0" />
          <stop offset="0.65" stopColor="#9c9c9c" />
          <stop offset="0.82" stopColor="#7c7c7c" />
          <stop offset="0.92" stopColor="#505050" />
          <stop offset="1" stopColor="#1a1a1a" />
        </linearGradient>
        <linearGradient id="bore" gradientUnits="userSpaceOnUse" x1="1325" y1="592" x2="1391" y2="474">
          <stop offset="0" stopColor="#262626" />
          <stop offset="0.2" stopColor="#7a7a7a" />
          <stop offset="0.5" stopColor="#acacac" />
          <stop offset="0.7" stopColor="#a6a6a6" />
          <stop offset="0.86" stopColor="#828282" />
          <stop offset="1" stopColor="#505050" />
        </linearGradient>
        <linearGradient id="filletL" gradientUnits="userSpaceOnUse" x1="1162" y1="739" x2="1143" y2="772">
          <stop offset="0" stopColor="#808080" />
          <stop offset="0.5" stopColor="#b2b2b2" />
          <stop offset="0.8" stopColor="#a6a6a6" />
          <stop offset="1" stopColor="#858585" />
        </linearGradient>
        <linearGradient id="filletR" gradientUnits="userSpaceOnUse" x1="1455" y1="682" x2="1475" y2="716">
          <stop offset="0" stopColor="#808080" />
          <stop offset="0.5" stopColor="#b2b2b2" />
          <stop offset="0.8" stopColor="#a6a6a6" />
          <stop offset="1" stopColor="#858585" />
        </linearGradient>
      </defs>
      <g stroke="#111" strokeWidth="1.5" strokeLinejoin="round" fill="#808080">
        <path d="M724,733 L1308,396 L1893,733 L1308,1070 Z" />
        <path d="M724,733 L1308,1070 V1183 L724,846 Z" />
        <path d="M1893,733 L1308,1070 V1183 L1893,846 Z" />

        <path d="M1123,761 L1162,739 L1260,794 V839 Z" fill="url(#filletL)" />
        <path d="M1494,705 L1455,682 L1260,794 V839 Z" fill="url(#filletR)" />
        <path d="M1123,761 L1162,739 Q1163,757 1123,761 Z" fill="#505050" />
        <path d="M1494,705 L1455,682 Q1456,702 1494,705 Z" fill="#505050" />

        <path d="M1162,536 L1260,591 V794 L1162,739 Z" />
        <path d={`M${backHalf} L${frontBack} Z`} fill="url(#arch)" />
        <path d={`M${front} V682 L1260,794 Z`} />
        <path d={`M${hole} Z`} fill="url(#bore)" />
        <path d="M1358,479 L1406,508" />
      </g>
      <path d="M1440,429 L1455,423 L1443,434 Z" fill="#208020" stroke="#208020" />
      <path d="M1308,396 V364" stroke="#0000ff" strokeWidth="2" />
      <path d="M1308,337 L1313,363 Q1308,367 1304,363 Z" fill="#20207f" />
      <path d="M1323,516 L1434,580" stroke="#7f2020" strokeWidth="1.6" />
      <path d="M1456,593 L1438,576 Q1431,577 1431,584 Z" fill="#7f2020" />
    </svg>
  );
}

/* ---------- hand-drawn marker ---------- */

const loop: Pt[] = [
  [122, 362], [135, 354], [175, 337], [224, 335], [286, 343], [347, 358], [408, 383], [469, 415], [531, 470], [584, 527],
  [608, 560], [618, 600], [620, 655], [608, 740], [592, 807], [563, 853], [531, 877], [469, 902], [396, 917], [327, 920],
  [245, 913], [175, 902], [135, 885], [82, 847], [53, 810], [33, 747], [18, 683], [14, 640], [12, 577], [16, 510],
  [31, 443], [57, 397], [94, 373], [132, 361],
];
const strokes = [
  smooth(loop),
  smooth([[553, 847], [570, 851], [640, 853], [700, 861]]),
  smooth([[565, 850], [568, 900], [567, 980], [570, 1018], [576, 1022]]),
  smooth([[560, 850], [585, 885], [616, 932], [674, 990], [708, 1030], [734, 1068]]),
];

function Marker() {
  return (
    <svg viewBox="0 0 1924 1244" width="1924" height="1244" className="pointer-events-none absolute top-0 left-0 max-w-none" aria-hidden="true">
      <defs>
        <filter id="crayon" filterUnits="userSpaceOnUse" x="0" y="300" width="780" height="800">
          <feTurbulence type="fractalNoise" baseFrequency="0.28" numOctaves="3" seed="4" result="n" />
          <feDisplacementMap in="SourceGraphic" in2="n" scale="11" xChannelSelector="R" yChannelSelector="G" result="rough" />
          <feColorMatrix in="n" type="matrix" values="0 0 0 0 0  0 0 0 0 0  0 0 0 0 0  0 0 -12 0 7.8" result="grain" />
          <feComposite in="rough" in2="grain" operator="in" />
        </filter>
      </defs>
      <g filter="url(#crayon)" fill="none" stroke="#e84549" strokeLinecap="round" strokeLinejoin="round">
        {strokes.map((d) => <path key={d} d={d} strokeWidth="15" />)}
      </g>
      <g fill="none" stroke="#e84549" strokeLinecap="round" opacity="0.6">
        {strokes.map((d) => <path key={d} d={d} strokeWidth="7" />)}
      </g>
    </svg>
  );
}

export default function App() {
  return (
    <div className="relative flex h-screen flex-col overflow-hidden bg-white pt-px pl-[54px] font-['Inter','Noto_Sans_CJK_JP',sans-serif]">
      <Gradients />
      <div className="flex h-[51px] shrink-0 items-center justify-between border-b-2 border-[#dcdedd] bg-[#f0f3f2] pr-[45px] pb-[6px] pl-3">
        <div className="flex gap-4">
          <button type="button" aria-label="閉じる" className="size-6 rounded-full border border-[#d9564b] bg-[#ed6b5f]" />
          <button type="button" aria-label="しまう" className="size-6 rounded-full border border-[#dca33c] bg-[#f5bf4f]" />
          <button type="button" aria-label="拡大" className="size-6 rounded-full border border-[#51a73f] bg-[#62c655]" />
        </div>
        <h1 className="text-[26px] font-bold text-[#4a4b4b]">FreeCAD 0.20.2</h1>
      </div>

      <Toolbar label="ファイル">
        <div className="-ml-[2px] flex shrink-0"><Handle /></div>
        <Tool name="new" label="新規" />
        <Tool name="open" label="開く" />
        <Tool name="save" label="保存" />
        <Tool name="print" label="印刷" />
        <Sep />
        <Tool name="cut" label="切り取り" />
        <Tool name="copy" label="コピー" />
        <Tool name="paste" label="貼り付け" />
        <Sep />
        <MenuTool name="undo" label="元に戻す" dim />
        <MenuTool name="redo" label="やり直す" dim />
        <Sep />
        <MenuTool name="check" label="編集モード" />
        <Sep />
        <Tool name="refresh" label="更新" />
        <Sep />
        <Tool name="help" label="ヘルプ" />
        <Handle />
        <div className="relative mx-4 mb-1 h-10 w-[370px] shrink-0">
          <select aria-label="ワークベンチ" className="h-full w-full appearance-none rounded-[10px] bg-white pl-14 text-[26px] text-[#222] shadow">
            <option>Part Design</option>
          </select>
          <Icon name="partDesign" className="pointer-events-none absolute top-1 left-[18px] size-[30px]" />
          <span className="pointer-events-none absolute top-1 right-1 flex size-8 flex-col items-center justify-center rounded-lg bg-linear-to-b from-[#2b93ff] to-[#007aff] text-white">
            <ChevronUp className="-mb-[2px] size-4" strokeWidth={4} />
            <ChevronDown className="size-4" strokeWidth={4} />
          </span>
        </div>
        <Handle />
        <Tool name="record" label="記録" />
        <Tool name="stop" label="停止" />
        <Tool name="notepad" label="マクロ" />
        <Tool name="play" label="実行" />
      </Toolbar>

      <Toolbar label="表示">
        <div className="-ml-[2px] flex shrink-0"><Handle /></div>
        <Tool name="part" label="パーツ" />
        <Tool name="folder" label="グループ" />
        <Tool name="link" label="リンク" />
        <MenuTool name="links" label="リンク操作" />
        <Handle />
        <Tool name="fitPage" label="全てにフィット" />
        <Tool name="fitSel" label="選択にフィット" />
        <MenuTool name="noDraw" label="描画スタイル" />
        <Tool name="bbox" label="境界" />
        <Sep />
        <Tool name="left" label="戻る" />
        <Tool name="right" label="進む" />
        <MenuTool name="linkCube" label="リンク先" />
        <Sep />
        <MenuTool name="viewSync" label="ビュー同期" active />
        <Tool name="iso" label="等角" />
        <Sep />
        <Tool name="view-front" label="正面" />
        <Tool name="view-top" label="上面" />
        <Tool name="view-right" label="右面" />
        <Sep />
        <Tool name="view-rear" label="背面" />
        <Tool name="view-bottom" label="底面" />
        <Tool name="view-left" label="左面" />
        <Sep />
        <Tool name="ruler" label="計測" />
        <Handle />
        <span className="ml-5 text-[20px] whitespace-nowrap text-[#222]">TechDrawS</span>
      </Toolbar>

      <Toolbar label="計測と Part Design">
        <div className="-ml-[2px] flex shrink-0"><Handle /></div>
        <Tool name="tape" label="距離" />
        <Tool name="tapeAngle" label="角度" />
        <Sep />
        <Tool name="tapeRefresh" label="再計測" />
        <Tool name="tapeClear" label="消去" />
        <Tool name="tapeAll" label="全て切替" />
        <Tool name="tape3d" label="3D 切替" />
        <Tool name="tapeDelta" label="差分切替" />
        <Handle />
        <Tool name="body" label="ボディー" />
        <Tool name="sketch" label="スケッチ" />
        <Tool name="import" label="編集" />
        <Tool name="mapSketch" label="面に貼る" />
        <Sep />
        <Tool name="point" label="点" />
        <Tool name="line" label="線" />
        <Tool name="plane" label="平面" />
        <Tool name="lcs" label="座標系" />
        <Tool name="binder" label="バインダー" />
        <Tool name="subBinder" label="サブバインダー" />
        <Tool name="clone" label="クローン" />
        <Handle />
        <Tool name="pad" label="パッド" />
        <Tool name="revolution" label="回転" />
        <Tool name="loft" label="ロフト" />
        <Tool name="pipe" label="パイプ" />
        <Tool name="helix" label="らせん" />
        <Tool name="pocket" label="ポケット" />
      </Toolbar>

      <main className="flex min-h-0 flex-1">
        <ComboView />
        <div className="min-w-0 flex-1">
          <Model />
        </div>
      </main>
      <Marker />
    </div>
  );
}
